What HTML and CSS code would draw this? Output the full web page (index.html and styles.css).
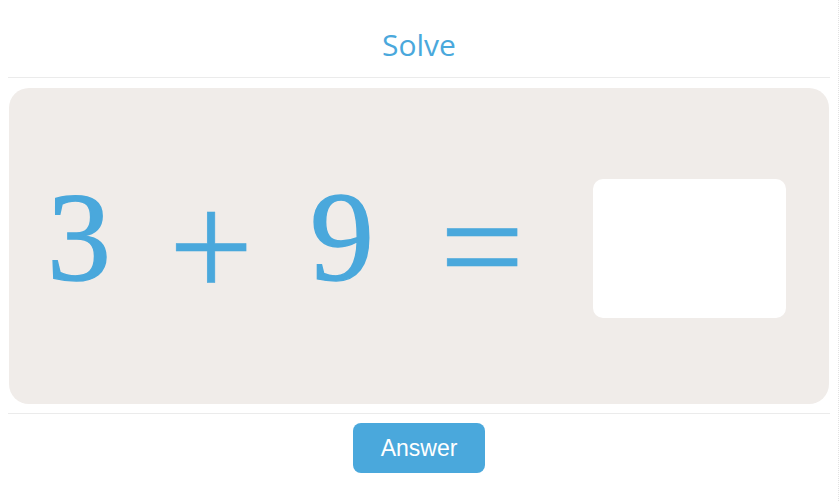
FILE: index.html
```html
<!DOCTYPE html>
<html>
<head>
<meta charset="utf-8">
<link rel="stylesheet" href="styles.css">
</head>
<body>
<div class="frame">
<div class="page">
  <header class="head"><h1 class="title">Solve</h1></header>
  <main class="card">
    <span class="sym n3">3</span>
    <span class="sym op plus">+</span>
    <span class="sym n9">9</span>
    <span class="sym op eq">=</span>
    <div class="answer-box"></div>
  </main>
  <footer class="foot"><button class="btn">Answer</button></footer>
</div>
</div>
</body>
</html>
```

FILE: styles.css
```css
html, body { margin: 0; padding: 0; background: #fff; }
.frame {
  width: 838px;
  height: 501px;
  border-right: 1px dotted #e2e2e2;
  box-sizing: content-box;
}
.page {
  width: 822px;
  margin: 0 0 0 8px;
  font-family: "Open Sans", sans-serif;
}
.head {
  height: 78px;
  border-bottom: 1px solid #ebebeb;
  display: flex;
  align-items: center;
  justify-content: center;
  box-sizing: border-box;
}
.title {
  margin: 0;
  padding-top: 12px;
  font-weight: 400;
  font-size: 30px;
  color: #4aa8dc;
}
.card {
  margin: 10px 1px 0 1px;
  height: 316px;
  background: #f0ece9;
  border-radius: 20px;
  display: flex;
  align-items: center;
  padding-left: 20px;
  box-sizing: border-box;
}
.sym {
  font-family: "Liberation Serif", "Times New Roman", serif;
  font-size: 128px;
  color: #4aa8dc;
  line-height: 1;
  -webkit-text-stroke: 1.4px #4aa8dc;
  width: 100px;
  text-align: center;
  margin-bottom: 18px;
}
.op {
  font-size: 150px;
  -webkit-text-stroke: 0.6px #4aa8dc;
  margin-bottom: 0;
}
.n3 { margin-right: 32px; }
.plus { margin-right: 31px; }
.n9 { margin-right: 40px; }
.eq { margin-right: 61px; }
.answer-box {
  width: 193px;
  height: 139px;
  background: #fff;
  border-radius: 10px;
  margin-top: 4px;
}
.foot {
  margin-top: 9px;
  border-top: 1px solid #ebebeb;
  display: flex;
  justify-content: center;
  padding-top: 9px;
}
.btn {
  width: 132px;
  height: 50px;
  border: none;
  border-radius: 8px;
  background: #4aa8dc;
  color: #fff;
  font-family: "Liberation Sans", Arial, sans-serif;
  font-size: 23px;
  padding: 0;
}
```
